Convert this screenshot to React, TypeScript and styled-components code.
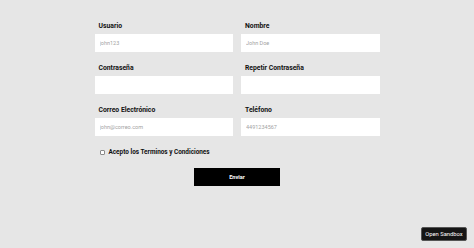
import React from 'react';
import styled, { createGlobalStyle } from 'styled-components';

const GlobalStyle = createGlobalStyle`
  html, body {
    margin: 0;
    padding: 0;
    background: #e6e6e6;
    font-family: Roboto, "Liberation Sans", sans-serif;
  }
`

const Page = styled.div`
  min-height: 248px;
  padding-top: 22px;
  box-sizing: border-box;
`
const Form = styled.form`
  width: 285px;
  margin: 0 auto;
  display: flex;
  flex-direction: column;
  gap: 12px;
`
const Grid = styled.div`
  display: grid;
  grid-template-columns: 1fr 1fr;
  column-gap: 8px;
  row-gap: 12px;
`
const Field = styled.div`
  display: flex;
  flex-direction: column;
  gap: 4px;
`
const Label = styled.label`
  font-size: 6.8px;
  line-height: 8px;
  font-weight: 700;
  color: #111;
  padding-left: 4px;
`
const Input = styled.input`
  height: 18px;
  box-sizing: border-box;
  border: none;
  background: #fff;
  padding: 0 4px 0 5px;
  font-family: Roboto, "Liberation Sans", sans-serif;
  font-size: 5.5px;
  color: #333;
  outline: none;
  &::placeholder {
    color: #a3a3a3;
  }
`
const CheckRow = styled.label`
  display: flex;
  align-items: center;
  gap: 4px;
  padding-left: 5px;
  height: 8px;
  font-size: 6.4px;
  font-weight: 700;
  color: #111;
`
const Box = styled.span`
  width: 5px;
  height: 5px;
  box-sizing: border-box;
  background: #fff;
  border: 1px solid #8a8a8a;
  border-radius: 1px;
`
const Submit = styled.button`
  align-self: center;
  width: 86px;
  height: 18px;
  border: none;
  background: #000;
  color: #fff;
  font-family: Roboto, "Liberation Sans", sans-serif;
  font-size: 5.6px;
  font-weight: 700;
  cursor: pointer;
`
const SandboxButton = styled.button`
  position: fixed;
  right: 7px;
  bottom: 7px;
  width: 46px;
  height: 14px;
  padding: 0;
  border: 1px solid #555;
  border-radius: 2px;
  background: #151515;
  color: #fff;
  font-family: Roboto, "Liberation Sans", sans-serif;
  font-size: 5.8px;
`

const fields = [
  { id: 'usuario', label: 'Usuario', placeholder: 'john123', type: 'text' },
  { id: 'nombre', label: 'Nombre', placeholder: 'John Doe', type: 'text' },
  { id: 'pass', label: 'Contraseña', placeholder: '', type: 'password' },
  { id: 'pass2', label: 'Repetir Contraseña', placeholder: '', type: 'password' },
  { id: 'correo', label: 'Correo Electrónico', placeholder: 'john@correo.com', type: 'email' },
  { id: 'tel', label: 'Teléfono', placeholder: '4491234567', type: 'tel' },
]

export default function App() {
  return (
    <Page>
      <GlobalStyle />
      <Form onSubmit={e => e.preventDefault()}>
        <Grid>
          {fields.map(f => (
            <Field key={f.id}>
              <Label htmlFor={f.id}>{f.label}</Label>
              <Input id={f.id} type={f.type} placeholder={f.placeholder} />
            </Field>
          ))}
        </Grid>
        <CheckRow>
          <Box />
          Acepto los Terminos y Condiciones
        </CheckRow>
        <Submit type="submit">Enviar</Submit>
      </Form>
      <SandboxButton>Open Sandbox</SandboxButton>
    </Page>
  )
}
